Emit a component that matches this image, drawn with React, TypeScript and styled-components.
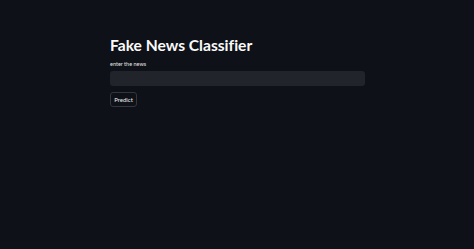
import React from 'react';
import styled, { createGlobalStyle } from 'styled-components';

const GlobalStyle = createGlobalStyle`
  html, body {
    margin: 0;
    padding: 0;
    background: #0e1117;
  }
  body {
    font-family: Lato, 'Noto Sans', sans-serif;
    color: #fafafa;
  }
`;

const Page = styled.div`
  width: 474px;
  height: 249px;
  background: #0e1117;
  padding: 34px 0 0 110px;
  box-sizing: border-box;
`;

const Main = styled.div`
  width: 255px;
  display: flex;
  flex-direction: column;
`;

const Title = styled.h1`
  margin: 0;
  font-size: 15.6px;
  font-weight: 700;
  line-height: 22px;
  color: #fafafa;
  font-variant-ligatures: none;
`;

const Label = styled.label`
  margin-top: 5px;
  font-size: 5.5px;
  line-height: 7px;
  color: #e6e6e6;
`;

const Input = styled.input`
  margin-top: 3px;
  height: 15px;
  border: none;
  border-radius: 3px;
  background: #22242c;
  outline: none;
  padding: 0 5px;
  color: #fafafa;
`;

const Button = styled.button`
  margin-top: 6px;
  align-self: flex-start;
  height: 15px;
  width: 27px;
  padding: 0;
  border: 1px solid #33363e;
  border-radius: 3px;
  background: #0e1117;
  color: #f0f0f0;
  font-family: inherit;
  font-size: 6px;
  line-height: 13px;
`;

export default function App() {
  return (
    <Page>
      <GlobalStyle />
      <Main>
        <Title>Fake News Classifier</Title>
        <Label>enter the news</Label>
        <Input type='text' />
        <Button type='button'>Predict</Button>
      </Main>
    </Page>
  );
}
